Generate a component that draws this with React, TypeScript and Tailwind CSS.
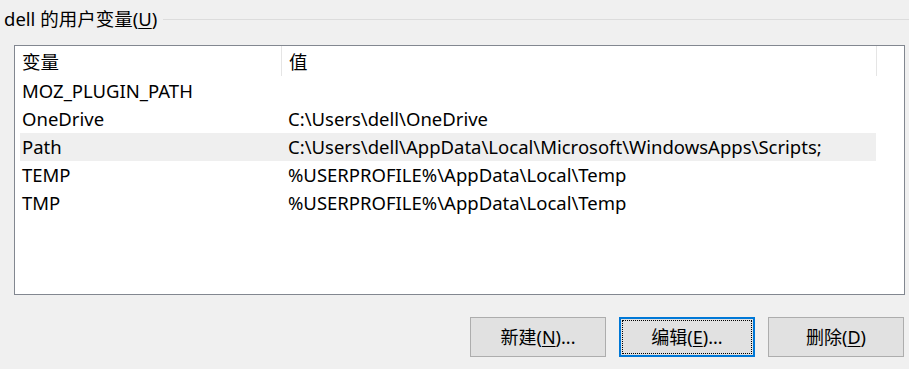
import React from "react";

const font = { fontFamily: '"Noto Sans", "Noto Sans CJK SC", sans-serif' };

const rows = [
  ["MOZ_PLUGIN_PATH", ""],
  ["OneDrive", "C:\\Users\\dell\\OneDrive"],
  ["Path", "C:\\Users\\dell\\AppData\\Local\\Microsoft\\WindowsApps\\Scripts;"],
  ["TEMP", "%USERPROFILE%\\AppData\\Local\\Temp"],
  ["TMP", "%USERPROFILE%\\AppData\\Local\\Temp"],
];

export default function App() {
  return (
    <div
      className="w-[909px] h-[369px] bg-[#f0f0f0] text-black overflow-hidden flex flex-col text-[18.5px] leading-none"
      style={font}
    >
      <div className="h-[38px] flex items-center pl-[4px]">
        <span className="whitespace-nowrap leading-none text-[18.5px]">
          dell 的用户变量(<span className="underline underline-offset-2">U</span>)
        </span>
        <div className="flex-1 h-px bg-[#dcdcdc] ml-[6px]" />
      </div>
      <div className="mt-[7px] ml-[14px] w-[891px] h-[250px] border border-[#828790] bg-white flex flex-col">
        <div className="h-[31px] flex shrink-0">
          <div className="w-[266px] flex items-center pl-[7px] pt-[2px]">变量</div>
          <div className="w-px h-[30px] bg-[#e5e5e5]" />
          <div className="w-[594px] flex items-center pl-[7px] pt-[2px]">值</div>
          <div className="w-px h-[30px] bg-[#e5e5e5]" />
        </div>
        <div className="flex flex-col">
          {rows.map(([k, v]) => (
            <div
              key={k}
              className={`h-[28px] flex items-center ml-[5px] w-[856px] pt-[1px] ${k === "Path" ? "bg-[#efefef]" : ""}`}
            >
              <div className="w-[268px] pl-[2px] whitespace-nowrap">{k}</div>
              <div className="whitespace-nowrap">{v}</div>
            </div>
          ))}
        </div>
      </div>
      <div className="mt-[22px] flex justify-end gap-[13px] pr-[5px] text-[18px]">
        <button className="w-[136px] h-[40px] bg-[#e1e1e1] border border-[#adadad] flex items-center justify-center">
          新建(<span className="underline underline-offset-2">N</span>)...
        </button>
        <button className="w-[136px] h-[40px] bg-[#e1e1e1] border-2 border-[#0078d7] flex items-center justify-center p-px">
          <span className="w-full h-full border border-dotted border-black flex items-center justify-center">
            编辑(<span className="underline underline-offset-2">E</span>)...
          </span>
        </button>
        <button className="w-[136px] h-[40px] bg-[#e1e1e1] border border-[#adadad] flex items-center justify-center">
          删除(<span className="underline underline-offset-2">D</span>)
        </button>
      </div>
    </div>
  );
}
